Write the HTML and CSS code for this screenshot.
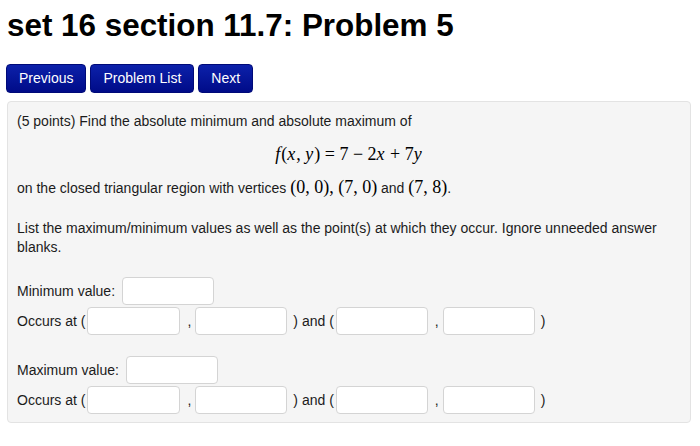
FILE: index.html
```html
<!DOCTYPE html>
<html lang="en">
<head>
  <meta charset="UTF-8">
  <title>set 16 section 11.7: Problem 5</title>
  <link rel="stylesheet" href="styles.css">
</head>
<body>
  <h1 class="title">set 16 section 11.7: Problem 5</h1>

  <nav class="nav-btns">
    <a href="#" class="btn">Previous</a>
    <a href="#" class="btn">Problem List</a>
    <a href="#" class="btn">Next</a>
  </nav>

  <div class="problem">
    <p class="line">(5 points) Find the absolute minimum and absolute maximum of</p>
    <div class="math-display"><i>f</i>(<i>x</i>, <i>y</i>) = 7 &minus; 2<i>x</i> + 7<i>y</i></div>
    <p class="line">on the closed triangular region with vertices <span class="math">(0, 0), (7, 0)</span> and <span class="math">(7, 8)</span>.</p>

    <p class="line list">List the maximum/minimum values as well as the point(s) at which they occur. Ignore unneeded answer blanks.</p>

    <div class="answers">
      <div class="row">
        <span>Minimum value:</span>
        <input type="text" class="ans ans-value">
      </div>
      <div class="row">
        <span>Occurs at (</span>
        <input type="text" class="ans first">
        <span class="comma">,</span>
        <input type="text" class="ans">
        <span class="and">) and (</span>
        <input type="text" class="ans">
        <span class="comma">,</span>
        <input type="text" class="ans">
        <span class="close">)</span>
      </div>
    </div>

    <div class="answers">
      <div class="row">
        <span>Maximum value:</span>
        <input type="text" class="ans ans-value">
      </div>
      <div class="row">
        <span>Occurs at (</span>
        <input type="text" class="ans first">
        <span class="comma">,</span>
        <input type="text" class="ans">
        <span class="and">) and (</span>
        <input type="text" class="ans">
        <span class="comma">,</span>
        <input type="text" class="ans">
        <span class="close">)</span>
      </div>
    </div>
  </div>
</body>
</html>
```

FILE: styles.css
```css
body { margin:0; padding:0 9px 0 7px; background:#fff; font-family:"Liberation Sans", Arial, sans-serif; color:#1b1b1b; }
.title { margin:0; padding-top:8px; font-size:31.4px; line-height:36px; font-weight:bold; color:#000; }
.nav-btns { display:flex; gap:4px; margin:20px 0 0 -1px; }
.btn { display:block; height:27px; line-height:27px; padding:0 12px; font-size:14px; color:#fff; text-decoration:none; border:1px solid #000a78; border-radius:4px; background:linear-gradient(#0c21aa, #000b88); }
.problem { margin-top:8px; padding:10px 9px 6px; background:#f5f5f5; border:1px solid #e3e3e3; border-radius:4px; font-size:14px; line-height:19px; }
.line { margin:0; }
.math-display { margin:14px 0; text-align:center; font-family:"Liberation Serif", "Times New Roman", serif; font-size:18px; line-height:19px; color:#000; }
.math-display i { margin-right:1px; }
.math { font-family:"Liberation Serif", "Times New Roman", serif; font-size:18px; color:#000; }
.list { margin-top:21px; }
.answers { margin-top:20px; }
.answers + .answers { margin-top:21px; }
.row { display:flex; align-items:center; height:28px; margin-bottom:2px; }
.ans { box-sizing:border-box; width:92px; height:28px; margin:0; padding:4px 6px; background:#fff; border:1px solid #d4d4d4; border-radius:4px; font-size:14px; }
.ans-value { margin-left:7px; }
.ans.first { margin-left:2px; width:93px; }
.comma { margin:0 4px 0 7px; }
.and { margin:0 2px 0 6px; }
.close { margin-left:6px; }
```
